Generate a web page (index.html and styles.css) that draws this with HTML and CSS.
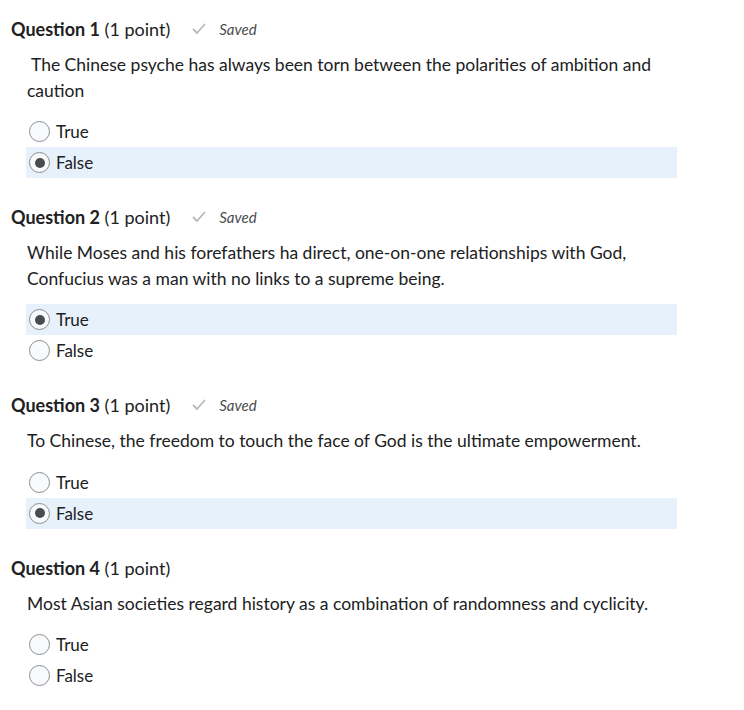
FILE: index.html
```html
<!DOCTYPE html>
<html>
<head>
<meta charset="utf-8">
<link rel="stylesheet" href="styles.css">
</head>
<body>
<div class="page">
  <section class="question">
    <h2 class="q-head"><span class="q-label"><span class="q-title">Question 1</span> (1 point)</span><span class="saved"><svg class="check" viewBox="0 0 14 12" width="14" height="12"><path d="M1.5 6.5 L5 10 L12.5 1.5" fill="none" stroke="#b5b9bd" stroke-width="1.8" stroke-linecap="round" stroke-linejoin="round"/></svg><span class="saved-text">Saved</span></span></h2>
    <p class="q-text">&nbsp;The Chinese psyche has always been torn between the polarities of ambition and caution</p>
    <div class="options">
      <div class="opt"><span class="radio"></span><span class="label">True</span></div>
      <div class="opt selected"><span class="radio on"></span><span class="label">False</span></div>
    </div>
  </section>
  <section class="question">
    <h2 class="q-head"><span class="q-label"><span class="q-title">Question 2</span> (1 point)</span><span class="saved"><svg class="check" viewBox="0 0 14 12" width="14" height="12"><path d="M1.5 6.5 L5 10 L12.5 1.5" fill="none" stroke="#b5b9bd" stroke-width="1.8" stroke-linecap="round" stroke-linejoin="round"/></svg><span class="saved-text">Saved</span></span></h2>
    <p class="q-text">While Moses and his forefathers ha direct, one-on-one relationships with God, Confucius was a man with no links to a supreme being.</p>
    <div class="options">
      <div class="opt selected"><span class="radio on"></span><span class="label">True</span></div>
      <div class="opt"><span class="radio"></span><span class="label">False</span></div>
    </div>
  </section>
  <section class="question">
    <h2 class="q-head"><span class="q-label"><span class="q-title">Question 3</span> (1 point)</span><span class="saved"><svg class="check" viewBox="0 0 14 12" width="14" height="12"><path d="M1.5 6.5 L5 10 L12.5 1.5" fill="none" stroke="#b5b9bd" stroke-width="1.8" stroke-linecap="round" stroke-linejoin="round"/></svg><span class="saved-text">Saved</span></span></h2>
    <p class="q-text">To Chinese, the freedom to touch the face of God is the ultimate empowerment.</p>
    <div class="options">
      <div class="opt"><span class="radio"></span><span class="label">True</span></div>
      <div class="opt selected"><span class="radio on"></span><span class="label">False</span></div>
    </div>
  </section>
  <section class="question">
    <h2 class="q-head"><span class="q-label"><span class="q-title">Question 4</span> (1 point)</span></h2>
    <p class="q-text">Most Asian societies regard history as a combination of randomness and cyclicity.</p>
    <div class="options">
      <div class="opt"><span class="radio"></span><span class="label">True</span></div>
      <div class="opt"><span class="radio"></span><span class="label">False</span></div>
    </div>
  </section>
</div>
</body>
</html>
```
FILE: styles.css
```css
html, body {
  margin: 0;
  padding: 0;
  background: #ffffff;
}
body {
  font-family: Lato, "Noto Sans", sans-serif;
  color: #202122;
}
.page {
  padding: 16px 0 0 11px;
  width: 666px;
}
.question {
  margin-bottom: 26px;
}
.q-head {
  margin: 0 0 10px 0;
  height: 26px;
  display: flex;
  align-items: center;
  font-size: 18px;
  line-height: 24px;
  font-weight: 400;
}
.q-title {
  font-weight: 700;
}
.saved {
  display: flex;
  align-items: center;
  margin-left: 22px;
}
.check {
  display: block;
  margin-right: 13px;
}
.saved-text {
  font-style: italic;
  font-size: 15px;
  line-height: 20px;
  color: #494c4e;
}
.q-text {
  margin: 0 0 13px 16px;
  font-size: 17.5px;
  line-height: 25.5px;
}
.options {
  margin-left: 15px;
}
.opt {
  display: flex;
  align-items: center;
  height: 31px;
  padding-left: 3px;
}
.opt.selected {
  background: #e7f1fc;
}
.radio {
  box-sizing: border-box;
  width: 21px;
  height: 21px;
  border: 1px solid #8a8e92;
  border-radius: 50%;
  background: #f9fafb;
  display: flex;
  align-items: center;
  justify-content: center;
  flex: none;
}
.radio.on::after {
  content: "";
  width: 10px;
  height: 10px;
  border-radius: 50%;
  background: #494c4e;
}
.label {
  margin-left: 6px;
  font-size: 17px;
  line-height: 31px;
}
```
